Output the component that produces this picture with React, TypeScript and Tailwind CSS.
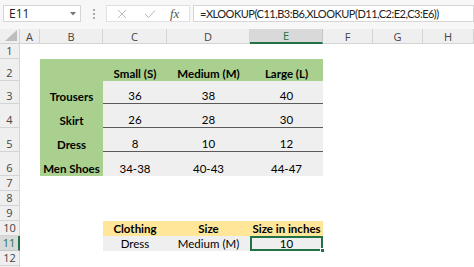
import React from "react";

const cols = ["A", "B", "C", "D", "E", "F", "G", "H"];
const rowCount = 13;

type Cell = { text?: string; bg?: string; bold?: boolean; line?: boolean; sel?: boolean };

const green = "bg-[#a9d08e]";
const grey = "bg-[#efefef]";
const yellow = "bg-[#ffe699]";

const sizes: [string, string, string, string][] = [
  ["Trousers", "36", "38", "40"],
  ["Skirt", "26", "28", "30"],
  ["Dress", "8", "10", "12"],
  ["Men Shoes", "34-38", "40-43", "44-47"],
];

function cellAt(r: number, c: string): Cell {
  if (r === 2) {
    if (c === "B") return { bg: green };
    if (c === "C") return { bg: green, text: "Small (S)", bold: true };
    if (c === "D") return { bg: green, text: "Medium (M)", bold: true };
    if (c === "E") return { bg: green, text: "Large (L)", bold: true };
  }
  if (r >= 3 && r <= 6) {
    const row = sizes[r - 3];
    const line = r < 6;
    if (c === "B") return { bg: green, text: row[0], bold: true };
    if (c === "C") return { bg: grey, text: row[1], line };
    if (c === "D") return { bg: grey, text: row[2], line };
    if (c === "E") return { bg: grey, text: row[3], line };
  }
  if (r === 10) {
    if (c === "C") return { bg: yellow, text: "Clothing", bold: true };
    if (c === "D") return { bg: yellow, text: "Size", bold: true };
    if (c === "E") return { bg: yellow, text: "Size in inches", bold: true };
  }
  if (r === 11) {
    if (c === "C") return { bg: grey, text: "Dress" };
    if (c === "D") return { bg: grey, text: "Medium (M)" };
    if (c === "E") return { bg: grey, text: "10", sel: true };
  }
  return {};
}

function FormulaBar() {
  return (
    <div className="h-[29px] flex items-start pt-[5px] bg-[#f7f7f7]">
      <div className="ml-[3px] w-[78px] h-[17px] bg-white border border-[#d6d6d6] flex items-center justify-between pl-[5px] pr-[4px]">
        <span className="text-[12px] text-[#222] leading-none">E11</span>
        <svg width="6" height="4" viewBox="0 0 6 4">
          <path d="M0 0 L6 0 L3 3.5 Z" fill="#777" />
        </svg>
      </div>
      <div className="w-[25px] h-[17px] flex flex-col items-center justify-center gap-[2px]">
        <span className="w-[2px] h-[2px] bg-[#aaa]" />
        <span className="w-[2px] h-[2px] bg-[#aaa]" />
        <span className="w-[2px] h-[2px] bg-[#aaa]" />
      </div>
      <div className="w-[84px] h-[17px] bg-white border border-[#e0e0e0] flex items-center">
        <svg className="ml-[10px]" width="10" height="10" viewBox="0 0 10 10">
          <path d="M1 1 L9 9 M9 1 L1 9" stroke="#b8b8b8" strokeWidth="1" />
        </svg>
        <svg className="ml-[17px]" width="12" height="10" viewBox="0 0 12 10">
          <path d="M1 5 L4.5 8.5 L11 1.5" stroke="#b8b8b8" strokeWidth="1" fill="none" />
        </svg>
        <span className="ml-[14px] text-[13px] italic text-[#555] leading-none font-['Liberation_Serif',serif]">
          fx
        </span>
      </div>
      <div className="ml-[3px] flex-1 h-[17px] bg-white border border-[#d6d6d6] flex items-center pl-[6px]">
        <span className="text-[11px] tracking-[-0.5px] text-[#222] leading-none whitespace-nowrap font-['Lato',sans-serif]">
          =XLOOKUP(C11,B3:B6,XLOOKUP(D11,C2:E2,C3:E6))
        </span>
      </div>
    </div>
  );
}

export default function App() {
  const dataRows = Array.from({ length: rowCount }, (_, i) => i + 1);
  return (
    <div className="w-[474px] h-[267px] overflow-hidden bg-white font-['Open_Sans',sans-serif]">
      <FormulaBar />
      <div className="grid grid-cols-[20px_20px_63px_64px_83px_73px_50px_50px_1fr] grid-rows-[15px_15px_22px_23px_24px_24px_24px_15px_15px_15px_15px_15px_15px_15px]">
        <div className="bg-[#efefef] border-b border-r border-[#d4d4d4] flex items-end justify-end p-[2px]">
          <svg width="12" height="11" viewBox="0 0 12 11">
            <path d="M12 0 L12 11 L0 11 Z" fill="#bdbdbd" />
          </svg>
        </div>
        {cols.map((c) => (
          <div
            key={c}
            className={
              c === "E"
                ? "bg-[#d9d9d9] border-b-2 border-b-[#217346] border-r border-r-[#c6c6c6] flex items-center justify-center text-[11px] text-[#217346] leading-none"
                : "bg-[#efefef] border-b border-[#d4d4d4] border-r flex items-center justify-center text-[11px] text-[#444] leading-none"
            }
          >
            {c}
          </div>
        ))}
        {dataRows.map((r) => (
          <React.Fragment key={r}>
            <div
              className={
                r === 11
                  ? "bg-[#d9d9d9] border-r-2 border-r-[#217346] border-b border-b-[#c6c6c6] flex items-end justify-center pb-[1px] text-[11px] text-[#217346] leading-[13px]"
                  : "bg-[#efefef] border-r border-b border-[#d4d4d4] flex items-end justify-center pb-[1px] text-[11px] text-[#444] leading-[13px]"
              }
            >
              {r}
            </div>
            {cols.map((c) => {
              const cell = cellAt(r, c);
              return (
                <div
                  key={c}
                  className={[
                    "relative flex items-end justify-center whitespace-nowrap text-[11.5px] leading-[15px] text-black font-['Lato',sans-serif]",
                    cell.bg ?? "",
                    cell.bold ? "font-bold" : "",
                    cell.line ? "border-b border-[#5a5a5a]" : "",
                  ].join(" ")}
                >
                  {cell.text}
                  {cell.sel && (
                    <>
                      <div className="absolute inset-0 border-2 border-[#217346]" />
                      <div className="absolute right-[-2px] bottom-[-2px] w-[5px] h-[5px] bg-[#217346] border border-white" />
                    </>
                  )}
                </div>
              );
            })}
          </React.Fragment>
        ))}
      </div>
    </div>
  );
}
